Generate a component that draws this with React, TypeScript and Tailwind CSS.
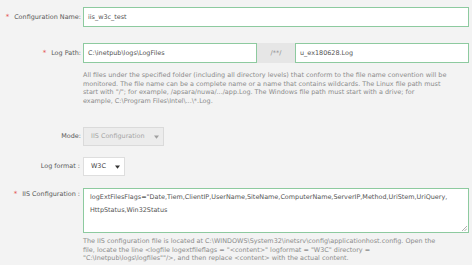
const font = "font-['DejaVu_Sans','Verdana',sans-serif]";

function Label(props: { text: string; required?: boolean; className?: string }) {
  return (
    <div
      className={`w-[81px] shrink-0 flex justify-end items-center text-[#5a5a5a] ${
        props.className || ''
      }`}
    >
      {props.required && (
        <span className="text-[#e4514c] text-[7px] mr-[5px] leading-none">*</span>
      )}
      <span>{props.text}</span>
    </div>
  );
}

function Caret(props: { color: string }) {
  return (
    <svg width="5" height="4" viewBox="0 0 5 4">
      <path d="M0 0.5 L5 0.5 L2.5 3.8 Z" fill={props.color} />
    </svg>
  );
}

function App() {
  return (
    <div className={`w-[474px] h-[268px] bg-white overflow-hidden ${font}`}>
      <div className="w-[472px] h-[265px] bg-[#f3f3f3] pt-[7px] pr-[3px] text-[6.45px] leading-[8.5px] overflow-hidden">
        {/* Configuration Name */}
        <div className="flex items-center">
          <Label text="Configuration Name:" required />
          <div className="ml-[2px] flex-1 h-[20px] bg-white border border-[#8dca9f] flex items-center px-[4px] text-[#555]">
            iis_w3c_test
          </div>
        </div>

        {/* Log Path */}
        <div className="flex items-center mt-[16px]">
          <Label text="Log Path:" required />
          <div className="ml-[2px] flex-1 flex h-[20px]">
            <div className="flex-1 bg-white border border-[#8dca9f] flex items-center px-[4px] text-[#555]">
              C:\inetpub\logs\LogFiles
            </div>
            <div className="w-[38px] bg-[#e6e6e6] flex items-center justify-center text-[#8a8a8a]">
              /**/
            </div>
            <div className="flex-1 bg-white border border-[#8dca9f] flex items-center px-[4px] text-[#555]">
              u_ex180628.Log
            </div>
          </div>
        </div>

        <div className="ml-[83px] mt-[8px] text-[#8c8c8c] whitespace-nowrap">
          <div>
            All files under the specified folder (including all directory levels) that conform to the file name convention will be
          </div>
          <div>
            monitored. The file name can be a complete name or a name that contains wildcards. The Linux file path must
          </div>
          <div>
            start with "/"; for example, /apsara/nuwa/.../app.Log. The Windows file path must start with a drive; for
          </div>
          <div>example, C:\Program Files\Intel\...\*.Log.</div>
        </div>

        {/* Mode */}
        <div className="flex items-center mt-[22px]">
          <Label text="Mode:" />
          <div className="ml-[2px] w-[81px] h-[19px] bg-[#ececec] border border-[#dadada] flex items-center justify-between pl-[7px] pr-[4px] text-[#a5a5a5]">
            <span>IIS Configuration</span>
            <Caret color="#a0a0a0" />
          </div>
        </div>

        {/* Log format */}
        <div className="flex items-center mt-[11px]">
          <Label text="Log format :" className="pr-[1px]" />
          <div className="ml-[2px] w-[42px] h-[19px] bg-white border border-[#dedede] flex items-center justify-between pl-[7px] pr-[4px] text-[#444]">
            <span>W3C</span>
            <Caret color="#333" />
          </div>
        </div>

        {/* IIS Configuration */}
        <div className="flex items-start mt-[12px]">
          <Label text="IIS Configuration :" required className="pt-[2px] pr-[1px]" />
          <div className="ml-[2px] flex-1 relative h-[45px] bg-white border border-[#8dca9f] pt-[2px] px-[6px] leading-[13px] text-[#555] whitespace-nowrap">
            <div>
              logExtFilesFlags="Date,Tiem,ClientIP,UserName,SiteName,ComputerName,ServerIP,Method,UriStem,UriQuery,
            </div>
            <div>HttpStatus,Win32Status</div>
            <svg
              className="absolute right-[1px] bottom-[1px]"
              width="6"
              height="6"
              viewBox="0 0 6 6"
            >
              <path d="M1 6 L6 1 M3.5 6 L6 3.5" stroke="#9a9a9a" strokeWidth="0.8" />
            </svg>
          </div>
        </div>

        <div className="ml-[83px] mt-[4px] text-[#8c8c8c] whitespace-nowrap">
          <div>
            The IIS configuration file is located at C:\WINDOWS\System32\inetsrv\config\applicationhost.config. Open the
          </div>
          <div>
            file, locate the line &lt;logfile logextfileflags = "&lt;content&gt;" logformat = "W3C" directory =
          </div>
          <div>"C:\Inetpub\logs\logfiles""/&gt;, and then replace &lt;content&gt; with the actual content.</div>
        </div>
      </div>
    </div>
  );
}

export default App;
